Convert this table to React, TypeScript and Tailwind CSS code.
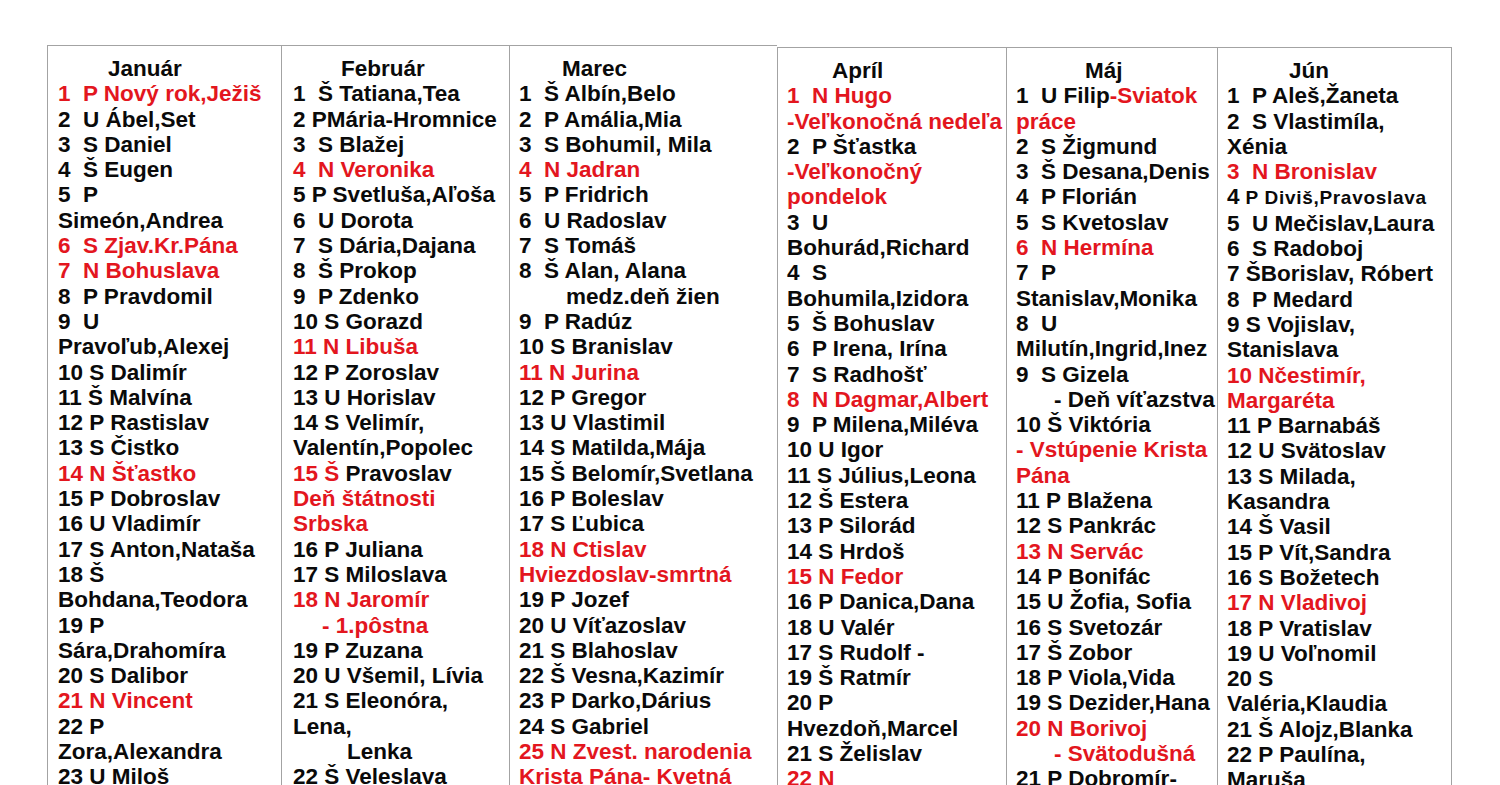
type Line = string | { c: string; s: string };

type Month = {
  name: string;
  head: string;
  box: string;
  lines: Line[];
};

// {..} = red text, [..] = the smaller print used once in June
const MONTHS: Month[] = [
  {
    name: 'Január',
    head: 'pl-[50px]',
    box: 'w-[234px] pl-[10px] mt-[45px]',
    lines: [
      '{1  P Nový rok,Ježiš}',
      '2  U Ábel,Set',
      '3  S Daniel',
      '4  Š Eugen',
      '5  P',
      'Simeón,Andrea',
      '{6  S Zjav.Kr.Pána}',
      '{7  N Bohuslava}',
      '8  P Pravdomil',
      '9  U',
      'Pravoľub,Alexej',
      '10 S Dalimír',
      '11 Š Malvína',
      '12 P Rastislav',
      '13 S Čistko',
      '{14 N Šťastko}',
      '15 P Dobroslav',
      '16 U Vladimír',
      '17 S Anton,Nataša',
      '18 Š',
      'Bohdana,Teodora',
      '19 P',
      'Sára,Drahomíra',
      '20 S Dalibor',
      '{21 N Vincent}',
      '22 P',
      'Zora,Alexandra',
      '23 U Miloš',
    ],
  },
  {
    name: 'Február',
    head: 'pl-[48px]',
    box: 'w-[228px] pl-[11px] mt-[45px]',
    lines: [
      '1  Š Tatiana,Tea',
      '2 PMária-Hromnice',
      '3  S Blažej',
      '{4  N Veronika}',
      '5 P Svetluša,Aľoša',
      '6  U Dorota',
      '7  S Dária,Dajana',
      '8  Š Prokop',
      '9  P Zdenko',
      '10 S Gorazd',
      '{11 N Libuša}',
      '12 P Zoroslav',
      '13 U Horislav',
      '14 S Velimír,',
      'Valentín,Popolec',
      '{15 Š} Pravoslav',
      '{Deň štátnosti}',
      '{Srbska}',
      '16 P Juliana',
      '17 S Miloslava',
      '{18 N Jaromír}',
      { c: 'pl-[29px]', s: '{- 1.pôstna}' },
      '19 P Zuzana',
      '20 U Všemil, Lívia',
      '21 S Eleonóra,',
      'Lena,',
      { c: 'pl-[54px]', s: 'Lenka' },
      '22 Š Veleslava',
    ],
  },
  {
    name: 'Marec',
    head: 'pl-[43px]',
    box: 'w-[268px] pl-[9px] mt-[45px]',
    lines: [
      '1  Š Albín,Belo',
      '2  P Amália,Mia',
      '3  S Bohumil, Mila',
      '{4  N Jadran}',
      '5  P Fridrich',
      '6  U Radoslav',
      '7  S Tomáš',
      '8  Š Alan, Alana',
      { c: 'pl-[47px]', s: 'medz.deň žien' },
      '9  P Radúz',
      '10 S Branislav',
      '{11 N Jurina}',
      '12 P Gregor',
      '13 U Vlastimil',
      '14 S Matilda,Mája',
      '15 Š Belomír,Svetlana',
      '16 P Boleslav',
      '17 S Ľubica',
      '{18 N Ctislav}',
      '{Hviezdoslav-smrtná}',
      '19 P Jozef',
      '20 U Víťazoslav',
      '21 S Blahoslav',
      '22 Š Vesna,Kazimír',
      '23 P Darko,Dárius',
      '24 S Gabriel',
      '{25 N Zvest. narodenia}',
      '{Krista Pána- Kvetná}',
    ],
  },
  {
    name: 'Apríl',
    head: 'pl-[45px]',
    box: 'w-[229px] pl-[9px] mt-[47px]',
    lines: [
      '{1  N Hugo}',
      '{-Veľkonočná nedeľa}',
      '2  P Šťastka',
      '{-Veľkonočný}',
      '{pondelok}',
      '3  U',
      'Bohurád,Richard',
      '4  S',
      'Bohumila,Izidora',
      '5  Š Bohuslav',
      '6  P Irena, Irína',
      '7  S Radhošť',
      '{8  N Dagmar,Albert}',
      '9  P Milena,Miléva',
      '10 U Igor',
      '11 S Július,Leona',
      '12 Š Estera',
      '13 P Silorád',
      '14 S Hrdoš',
      '{15 N Fedor}',
      '16 P Danica,Dana',
      '18 U Valér',
      '17 S Rudolf -',
      '19 Š Ratmír',
      '20 P',
      'Hvezdoň,Marcel',
      '21 S Želislav',
      '{22 N}',
    ],
  },
  {
    name: 'Máj',
    head: 'pl-[69px]',
    box: 'w-[211px] pl-[9px] mt-[47px]',
    lines: [
      '1  U Filip{-Sviatok}',
      '{práce}',
      '2  S Žigmund',
      '3  Š Desana,Denis',
      '4  P Florián',
      '5  S Kvetoslav',
      '{6  N Hermína}',
      '7  P',
      'Stanislav,Monika',
      '8  U',
      'Milutín,Ingrid,Inez',
      '9  S Gizela',
      { c: 'pl-[38px]', s: '- Deň víťazstva' },
      '10 Š Viktória',
      '{- Vstúpenie Krista}',
      '{Pána}',
      '11 P Blažena',
      '12 S Pankrác',
      '{13 N Servác}',
      '14 P Bonifác',
      '15 U Žofia, Sofia',
      '16 S Svetozár',
      '17 Š Zobor',
      '18 P Viola,Vida',
      '19 S Dezider,Hana',
      '{20 N Borivoj}',
      { c: 'pl-[38px]', s: '{- Svätodušná}' },
      '21 P Dobromír-',
    ],
  },
  {
    name: 'Jún',
    head: 'pl-[62px]',
    box: 'w-[235px] pl-[9px] mt-[47px] border-r',
    lines: [
      '1  P Aleš,Žaneta',
      '2  S Vlastimíla,',
      'Xénia',
      '{3  N Bronislav}',
      '4[ P Diviš,Pravoslava]',
      '5  U Mečislav,Laura',
      '6  S Radoboj',
      '7 ŠBorislav, Róbert',
      '8  P Medard',
      '9 S Vojislav,',
      'Stanislava',
      '{10 Nčestimír,}',
      '{Margaréta}',
      '11 P Barnabáš',
      '12 U Svätoslav',
      '13 S Milada,',
      'Kasandra',
      '14 Š Vasil',
      '15 P Vít,Sandra',
      '16 S Božetech',
      '{17 N Vladivoj}',
      '18 P Vratislav',
      '19 U Voľnomil',
      '20 S',
      'Valéria,Klaudia',
      '21 Š Alojz,Blanka',
      '22 P Paulína,',
      'Maruša',
    ],
  },
];

function Segments({ text }: { text: string }) {
  const parts = text.split(/(\{[^}]*\}|\[[^\]]*\])/).filter((p) => p !== '');
  return (
    <>
      {parts.map((p, i) => {
        if (p.startsWith('{')) {
          return (
            <span key={i} className="text-[#e3161e]">
              {p.slice(1, -1)}
            </span>
          );
        }
        if (p.startsWith('[')) {
          return (
            <span key={i} className="text-[19px] tracking-[0.7px]">
              {p.slice(1, -1)}
            </span>
          );
        }
        return <span key={i}>{p}</span>;
      })}
    </>
  );
}

function MonthColumn({ month }: { month: Month }) {
  return (
    <div className={`border-l border-t border-[#a3a3a3] pt-[10px] min-h-[800px] ${month.box}`}>
      <div className={`whitespace-pre ${month.head}`}>{month.name}</div>
      {month.lines.map((line, i) => {
        const s = typeof line === 'string' ? line : line.s;
        const c = typeof line === 'string' ? '' : line.c;
        return (
          <div key={i} className={`whitespace-pre ${c}`}>
            <Segments text={s} />
          </div>
        );
      })}
    </div>
  );
}

export default function App() {
  return (
    <div
      className="h-[785px] w-[1500px] overflow-hidden bg-white text-[#0a0a0a] font-bold text-[22.5px] leading-[25.3px]"
      style={{ fontFamily: '"Liberation Sans", Arial, sans-serif' }}
    >
      <div className="flex items-start pl-[47px]">
        {MONTHS.map((m) => (
          <MonthColumn key={m.name} month={m} />
        ))}
      </div>
    </div>
  );
}
